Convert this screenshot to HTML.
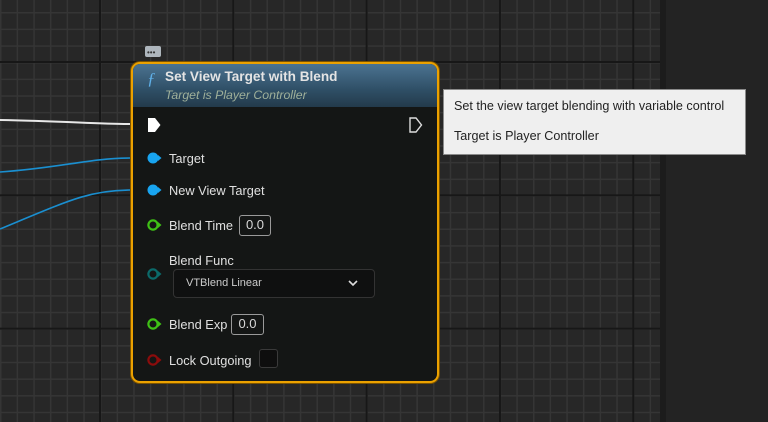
<!DOCTYPE html>
<html><head><meta charset="utf-8"><style>
*{margin:0;padding:0;box-sizing:border-box}
body{width:768px;height:422px;overflow:hidden;background:#232323;position:relative;font-family:"Liberation Sans",sans-serif}
#grid{position:absolute;left:0;top:0;width:660px;height:422px;background-color:#272727;
background-image:
linear-gradient(to right,#171717 0,#171717 2px,transparent 2px),
linear-gradient(to bottom,#171717 0,#171717 2px,transparent 2px),
linear-gradient(to right,#353535 0,#353535 1.5px,transparent 1.5px),
linear-gradient(to bottom,#353535 0,#353535 1.5px,transparent 1.5px);
background-size:133.33px 133.33px,133.33px 133.33px,16.667px 16.667px,16.667px 16.667px;
background-position:99px 0,0 61px,0 0,0 12px}
#strip{position:absolute;left:660px;top:0;width:6px;height:422px;background:#1c1c1c}
.node{position:absolute;left:131px;top:62px;width:308px;height:321px;border:2px solid #eba100;border-radius:9px;background:#141615;overflow:hidden;box-shadow:0 0 0 1px #7a5200}
.hdr{position:absolute;left:0;top:0;right:0;height:43px;background:linear-gradient(#4b7391,#2f4f66 60%,#233a4b);}
.f{position:absolute;left:14px;top:5px;color:#5fb0e8;font-family:"Liberation Serif",serif;font-style:italic;font-size:17px}
.t1{position:absolute;left:32px;top:5px;color:#e4e4e4;font-weight:bold;font-size:13.6px}
.t2{position:absolute;left:32px;top:24px;color:#9fb09a;font-style:italic;font-size:12.3px}
.lbl{position:absolute;color:#e0e0e0;font-size:12.8px}
.pin{position:absolute}
.box{position:absolute;border:1.5px solid #9a9a9a;border-radius:3px;color:#d8d8d8;font-size:13px;text-align:center;line-height:18px}
.tip{position:absolute;left:443px;top:89px;width:303px;height:66px;background:#efefef;border:1px solid #8a8a8a;color:#222;font-size:12.6px}
</style></head><body>
<div id="grid"></div><div id="strip"></div>
<svg style="position:absolute;left:0;top:0" width="768" height="422">
<path d="M0 120 C60 121 100 124 131 124" stroke="#e8e8e8" stroke-width="2" fill="none"/>
<path d="M0 172 C60 168 90 158 131 158" stroke="#1a8fd0" stroke-width="1.6" fill="none"/>
<path d="M0 229 C70 200 90 190 131 190" stroke="#1a8fd0" stroke-width="1.6" fill="none"/>
<rect x="145" y="46" width="16" height="11" rx="2" fill="#aeb6bd"/>
<text x="147" y="55" font-size="8" fill="#333" font-family="Liberation Sans">•••</text>
</svg>
<div class="node">
<div class="hdr"><span class="f">ƒ</span><span class="t1">Set View Target with Blend</span><span class="t2">Target is Player Controller</span></div>
<svg class="pin" style="left:0;top:0" width="308" height="321">
<path d="M15 54 h7 l5.5 7 l-5.5 7 h-7z" fill="#fff"/>
<path d="M277 54 h6 l5.5 7 l-5.5 7 h-6z" fill="none" stroke="#ddd" stroke-width="1.4"/>
<circle cx="20" cy="94" r="5.5" fill="#18a4f0"/><path d="M25 91 l3.5 3 l-3.5 3z" fill="#18a4f0"/>
<circle cx="20" cy="126" r="5.5" fill="#18a4f0"/><path d="M25 123 l3.5 3 l-3.5 3z" fill="#18a4f0"/>
<circle cx="20" cy="161" r="4.6" fill="none" stroke="#3fc016" stroke-width="2.2"/><path d="M25 158 l3.5 3 l-3.5 3z" fill="#3fc016"/>
<circle cx="20" cy="210" r="4.6" fill="none" stroke="#0b6a6a" stroke-width="2.2"/><path d="M25 207 l3.5 3 l-3.5 3z" fill="#0b6a6a"/>
<circle cx="20" cy="260" r="4.6" fill="none" stroke="#3fc016" stroke-width="2.2"/><path d="M25 257 l3.5 3 l-3.5 3z" fill="#3fc016"/>
<circle cx="20" cy="296" r="4.6" fill="none" stroke="#8b0c0c" stroke-width="2.2"/><path d="M25 293 l3.5 3 l-3.5 3z" fill="#8b0c0c"/>
</svg>
<div class="lbl" style="left:36px;top:87px">Target</div>
<div class="lbl" style="left:36px;top:119px">New View Target</div>
<div class="lbl" style="left:36px;top:154px">Blend Time</div>
<div class="box" style="left:106px;top:151px;width:32px;height:21px">0.0</div>
<div class="lbl" style="left:36px;top:189px">Blend Func</div>
<div style="position:absolute;left:40px;top:205px;width:202px;height:29px;border:1px solid #333;border-radius:4px;background:#0f1010;color:#ccc;font-size:11px;line-height:27px;padding-left:12px">VTBlend Linear
<svg style="position:absolute;left:174px;top:10px" width="10" height="7"><path d="M1 1 l4 4 l4 -4" stroke="#ddd" stroke-width="1.6" fill="none"/></svg></div>
<div class="lbl" style="left:36px;top:253px">Blend Exp</div>
<div class="box" style="left:98px;top:250px;width:33px;height:21px">0.0</div>
<div class="lbl" style="left:36px;top:289px">Lock Outgoing</div>
<div style="position:absolute;left:126px;top:285px;width:19px;height:19px;border:1px solid #3a3a3a;border-radius:3px;background:#0e0e0e"></div>
</div>
<div class="tip"><div style="position:absolute;left:10px;top:9px">Set the view target blending with variable control</div><div style="position:absolute;left:10px;top:39px">Target is Player Controller</div></div>
</body></html>
